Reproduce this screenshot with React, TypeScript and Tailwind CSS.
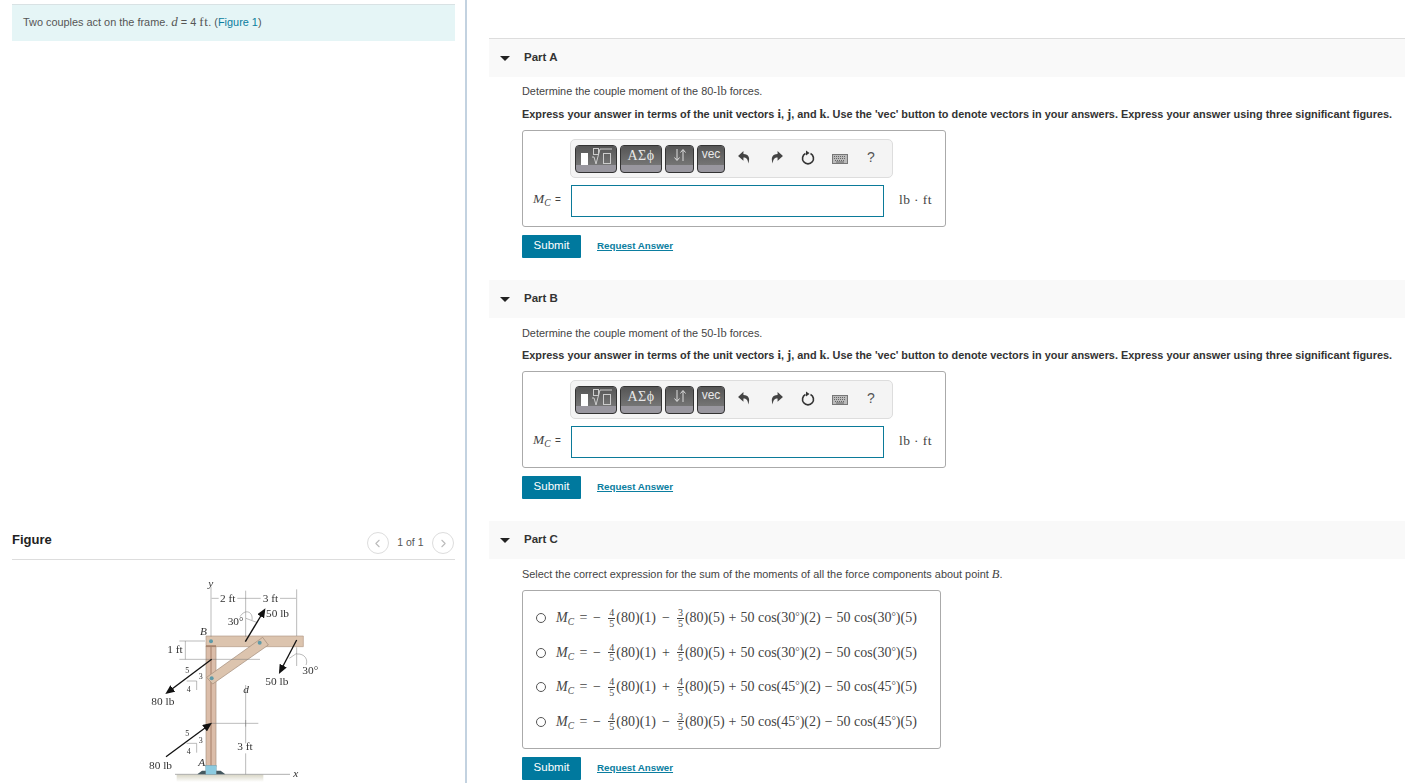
import React from 'react';
import { ChevronLeft, ChevronRight } from 'lucide-react';

const serif = "font-['Liberation_Serif',serif]";

function Frac({ n, d }: { n: string; d: string }) {
  return (
    <span className="inline-flex flex-col items-center align-middle mx-[1px] text-[10px] leading-[9.500px] -translate-y-[1px]">
      <span className="border-b border-[#444] px-[1px]">{n}</span>
      <span>{d}</span>
    </span>
  );
}

function Mc() {
  return (
    <span className="italic">
      M<sub className="text-[9.500px] italic align-baseline relative top-[3px]">C</sub>
    </span>
  );
}

function Cos({ angle, tail }: { angle: string; tail: string }) {
  return (
    <span>
      50 cos({angle}<span className="text-[11px] relative -top-[2px]">°</span>)({tail})
    </span>
  );
}

function Equation({ first, second, angle }: { first: string; second: [string, string]; angle: string }) {
  return (
    <span className={`${serif} text-[14px] text-[#444] whitespace-nowrap`}>
      <Mc /> <span className="mx-[2px]">=</span> <span className="mr-[3px]">−</span> <Frac n="4" d="5" />(80)(1){' '}
      <span className="mx-[2.500px]">{first}</span> <Frac n={second[0]} d={second[1]} />(80)(5){' '}
      <span className="mx-[0.500px]">+</span> <Cos angle={angle} tail="2" /> <span className="mx-[0.500px]">−</span>{' '}
      <Cos angle={angle} tail="5" />
    </span>
  );
}

function ToolButton({ className, children }: { className: string; children: React.ReactNode }) {
  return (
    <div className={`h-[28px] rounded-[4px] border border-[#333] overflow-hidden flex flex-col bg-[#99979f] ${className}`}>
      <div className="h-[19px] bg-gradient-to-b from-[#555] to-[#757575] flex items-center justify-center text-[#e8e8e8]">
        {children}
      </div>
    </div>
  );
}

function Toolbar() {
  return (
    <div className="w-[323px] h-[39px] ml-[47px] rounded-[5px] border border-[#ddd] bg-[#f4f4f4] flex items-center pl-[4px]">
      <ToolButton className="w-[42px]">
        <svg width="40" height="19" viewBox="0 0 40 19" className="shrink-0">
          <rect x="5" y="7" width="7" height="12" fill="#fff" />
          <rect x="17.500" y="2.500" width="5" height="6" fill="none" stroke="#ccc" />
          <path d="M16 11h2l2 7 4-15h12" fill="none" stroke="#ccc" />
          <rect x="27.500" y="7.500" width="7" height="10" fill="none" stroke="#ccc" />
        </svg>
      </ToolButton>
      <ToolButton className="w-[42px] ml-[3px]">
        <span className={`${serif} text-[14px] mt-[1px] tracking-[0.500px] whitespace-nowrap`}>ΑΣϕ</span>
      </ToolButton>
      <ToolButton className="w-[29px] ml-[3px]">
        <svg width="14" height="14" viewBox="0 0 14 14" className="-mt-[1px]" fill="none" stroke="#ddd">
          <path d="M4 1v11M1.500 9.500L4 12.500l2.500-3M10 13V2M7.500 4.500L10 1.500l2.500 3" />
        </svg>
      </ToolButton>
      <ToolButton className="w-[28px] ml-[3px]">
        <span className="text-[12px] leading-none mb-[3px]">vec</span>
      </ToolButton>
      <svg width="15" height="15" viewBox="0 0 14 14" className="ml-[12px] -mt-[2px]" fill="#444">
        <path d="M6 1L1 5.500 6 10V7c2.800 0 4 1.200 4.500 5.500C12.500 7.500 11 3.800 6 3.800z" />
      </svg>
      <svg width="15" height="15" viewBox="0 0 14 14" className="ml-[17px] -mt-[2px]" fill="#444">
        <path d="M8 1l5 4.500L8 10V7c-2.800 0-4 1.200-4.500 5.500C1.500 7.500 3 3.800 8 3.800z" />
      </svg>
      <svg width="16" height="16" viewBox="0 0 16 16" className="ml-[16px] -mt-[2px]" fill="none" stroke="#333" strokeWidth="1.600">
        <path d="M10.500 3.500a5.500 5.500 0 1 1-5 0" />
        <path d="M6 0.500v5l3.500-2.500z" fill="#333" stroke="none" />
      </svg>
      <svg width="16" height="10" viewBox="0 0 16 10" className="ml-[16px] mt-[1px]">
        <rect x="0.500" y="0.500" width="15" height="9" fill="#bbb" stroke="#777" />
        <path d="M2 2.500h12M2 4.500h12M3 6.500h10" stroke="#666" strokeDasharray="1 1" />
        <path d="M4 8h8" stroke="#666" />
      </svg>
      <span className="ml-[19px] -mt-[3px] text-[14px] text-[#555]">?</span>
    </div>
  );
}

function Answer() {
  return (
    <div className="w-[424px] h-[97px] rounded-[3px] border border-[#aaa] pt-[8px]">
      <Toolbar />
      <div className="flex items-center mt-[7px]">
        <span className={`w-[48px] pl-[10px] pb-[3px] text-[13.500px] text-[#444] whitespace-nowrap ${serif}`}>
          <Mc /> <span className="font-['Liberation_Sans',sans-serif] text-[10px] ml-[1px]">=</span>
        </span>
        <input type="text" className="w-[313px] h-[32px] border border-[#0b7a99] outline-none bg-white" />
        <span className={`ml-[15px] pb-[2px] text-[13.500px] tracking-[0.400px] text-[#444] ${serif}`}>lb · ft</span>
      </div>
    </div>
  );
}

function Actions() {
  return (
    <div className="flex items-center mt-[8px]">
      <button className="w-[59px] h-[23px] pb-[2px] bg-[#00799e] rounded-[1px] text-white text-[11.500px]">Submit</button>
      <a className="ml-[16px] text-[9.750px] font-bold underline text-[#0b7ea0]">Request Answer</a>
    </div>
  );
}

function PartHeader({ label, first }: { label: string; first?: boolean }) {
  return (
    <div className={`bg-[#f9f9f9] flex items-center ${first ? 'h-[39px] border-t border-[#ddd]' : 'h-[38px]'}`}>
      <span className="ml-[11px] w-0 h-0 border-x-[5px] border-x-transparent border-t-[5px] border-t-[#222]" />
      <span className="ml-[14px] text-[11.500px] font-bold text-[#333]">{label}</span>
    </div>
  );
}

function UnitParagraphs({ force, first }: { force: string; first?: boolean }) {
  return (
    <>
      <p className={`text-[10.900px] leading-[14px] text-[#444] ${first ? 'mt-[7px]' : 'mt-[8px]'}`}>
        Determine the couple moment of the {force}-<span className={`${serif} text-[12.500px]`}>lb</span> forces.
      </p>
      <p className={`text-[10.900px] leading-[14px] font-bold text-[#333] whitespace-nowrap ${first ? 'mt-[9px]' : 'mt-[8px]'}`}>
        Express your answer in terms of the unit vectors <span className={`${serif} text-[12.500px]`}>i</span>,{' '}
        <span className={`${serif} text-[12.500px]`}>j</span>, and <span className={`${serif} text-[12.500px]`}>k</span>. Use the 'vec' button to denote vectors in your answers. Express your answer using three significant figures.
      </p>
    </>
  );
}

function FrameFigure() {
  const labels: [number, number, string][] = [
    [240, 96, '2 ft'], [368, 96, '3 ft'], [263, 164, '30°'], [378, 142, '50 lb'],
    [82, 250, '1 ft'], [487, 311, '30°'], [376, 344, '50 lb'], [34, 406, '80 lb'],
    [292, 541, '3 ft'], [27, 596, '80 lb'], [136, 310, '5'], [140, 366, '4'], [176, 328, '3'],
    [136, 498, '5'], [140, 552, '4'], [176, 518, '3'],
  ];
  const arrows = [
    'M316 215L366 132', 'M470 210L426 294', 'M215 268L92 360', 'M78 560L200 470',
  ];
  return (
    <svg width="190" height="213" viewBox="0 0 570 639" className="blur-[0.4px]">
      <defs>
        <marker id="head" markerWidth="8" markerHeight="6" refX="2" refY="3" orient="auto">
          <path d="M0 0L7 3 0 6z" fill="#111" />
        </marker>
        <linearGradient id="ground" x1="0" y1="0" x2="0" y2="1">
          <stop offset="0" stopColor="#d8d6c6" />
          <stop offset="1" stopColor="#ffffff" />
        </linearGradient>
      </defs>
      <rect x="110" y="614" width="260" height="22" fill="url(#ground)" />
      <path d="M105 613H450" stroke="#888" strokeWidth="2" />
      <path d="M198 228H228V590H198z" fill="#dbbda9" stroke="#a8917f" strokeWidth="2" />
      <path d="M213 228V590" stroke="#a57f68" strokeWidth="3" />
      <path d="M198 198H490V230H198z" fill="#dcc4ae" stroke="#b39c88" strokeWidth="2" />
      <path d="M200 322L218 342 385 225 368 202z" fill="#dcc4ae" stroke="#a08a77" strokeWidth="2" />
      <path d="M198 228H228" stroke="#8a5f46" strokeWidth="3" />
      <rect x="197" y="586" width="32" height="27" fill="#8ccbe0" stroke="#5a8a9a" />
      <path d="M172 613L186 602H197V613zM229 613V602H242L256 613z" fill="#44585f" />
      <circle cx="213" cy="214" r="6" fill="#5f9aa8" />
      <circle cx="359" cy="218" r="6" fill="#5f9aa8" />
      <circle cx="215" cy="325" r="6" fill="#5f9aa8" />
      <g stroke="#777" strokeWidth="1.500" fill="none">
        <path d="M213 50V200M317 62V200M317 345V520M317 550V613M470 58V198M470 232V288" />
        <path d="M215 85H236M292 85H362M420 85H468" />
        <path d="M118 213H195M118 268H360M136 213V268M215 460H355M317 450V470" />
        <path d="M318 145L352 158M300 140C315 115 340 125 336 150M470 252C495 250 505 270 498 285M448 265L470 250" />
        <path d="M140 333H170V360M140 520H170V548" />
      </g>
      {arrows.map((d) => (
        <path key={d} d={d} stroke="#111" strokeWidth="4" fill="none" markerEnd="url(#head)" />
      ))}
      <g fontFamily="'Liberation Serif', serif" fontSize="34" fill="#333">
        {labels.map(([x, y, t]) => (
          <text key={`${x}-${y}`} x={x} y={y} fontSize={t.length === 1 ? 24 : 34}>{t}</text>
        ))}
        <text x="205" y="50" fontStyle="italic">y</text>
        <text x="180" y="195" fontStyle="italic">B</text>
        <text x="175" y="587" fontStyle="italic">A</text>
        <text x="310" y="370" fontStyle="italic">d</text>
        <text x="460" y="622" fontStyle="italic">x</text>
      </g>
    </svg>
  );
}

export default function App() {
  return (
    <div className="flex h-[783px] w-[1405px] overflow-hidden bg-white font-['Liberation_Sans',Arial,sans-serif]">
      <div className="w-[467px] shrink-0 border-r-2 border-[#c3d2e0] pl-[12px] pr-[10px] pt-[4px]">
        <div className="h-[37px] bg-[#e5f5f6] border-t border-[#d9e2e4] pl-[11px] pb-[2px] flex items-center text-[10.900px] text-[#555]">
          Two couples act on the frame.&nbsp;<span className={`${serif} italic text-[13px]`}>d</span>&nbsp;= 4&nbsp;<span className={`${serif} text-[13px] tracking-[0.500px]`}>ft</span>. (<a className="text-[#0b7ea0]">Figure 1</a>)
        </div>
        <div className="mt-[483px] h-[36px] border-b border-[#ddd] flex items-start justify-between">
          <span className="text-[13px] font-bold text-[#222] mt-[6px]">Figure</span>
          <div className="flex items-center mt-[8px] mr-[1px] text-[10.500px] text-[#555]">
            <span className="w-[22px] h-[22px] rounded-full border border-[#ddd] flex items-center justify-center">
              <ChevronLeft size={13} color="#bbb" />
            </span>
            <span className="mx-[8.500px]">1 of 1</span>
            <span className="w-[22px] h-[22px] rounded-full border border-[#ddd] flex items-center justify-center">
              <ChevronRight size={13} color="#bbb" />
            </span>
          </div>
        </div>
        <div className="pl-[128px] pt-[10px]">
          <FrameFigure />
        </div>
      </div>

      <div className="flex-1 pl-[22px] pt-[38px]">
        <PartHeader label="Part A" first />
        <div className="pl-[33px]">
          <UnitParagraphs force="80" first />
          <div className="mt-[9px]"><Answer /></div>
          <Actions />
        </div>

        <div className="mt-[22px]"><PartHeader label="Part B" /></div>
        <div className="pl-[33px]">
          <UnitParagraphs force="50" />
          <div className="mt-[9px]"><Answer /></div>
          <Actions />
        </div>

        <div className="mt-[22px]"><PartHeader label="Part C" /></div>
        <div className="pl-[33px]">
          <p className="text-[10.900px] leading-[14px] text-[#444] mt-[8px]">
            Select the correct expression for the sum of the moments of all the force components about point <span className={`${serif} italic text-[12.500px]`}>B</span>.
          </p>
          <div className="w-[419px] h-[159px] mt-[9px] rounded-[3px] border border-[#aaa] pl-[13px] pt-[10px] flex flex-col">
            {[
              { first: '−', second: ['3', '5'] as [string, string], angle: '30' },
              { first: '+', second: ['4', '5'] as [string, string], angle: '30' },
              { first: '+', second: ['4', '5'] as [string, string], angle: '45' },
              { first: '−', second: ['3', '5'] as [string, string], angle: '45' },
            ].map((o, i) => (
              <label key={i} className="h-[34.500px] shrink-0 flex items-center">
                <input type="radio" name="partc" className="appearance-none w-[10px] h-[10px] rounded-full border border-[#555] bg-white mr-[10px]" />
                <Equation first={o.first} second={o.second} angle={o.angle} />
              </label>
            ))}
          </div>
          <Actions />
        </div>
      </div>
    </div>
  );
}
